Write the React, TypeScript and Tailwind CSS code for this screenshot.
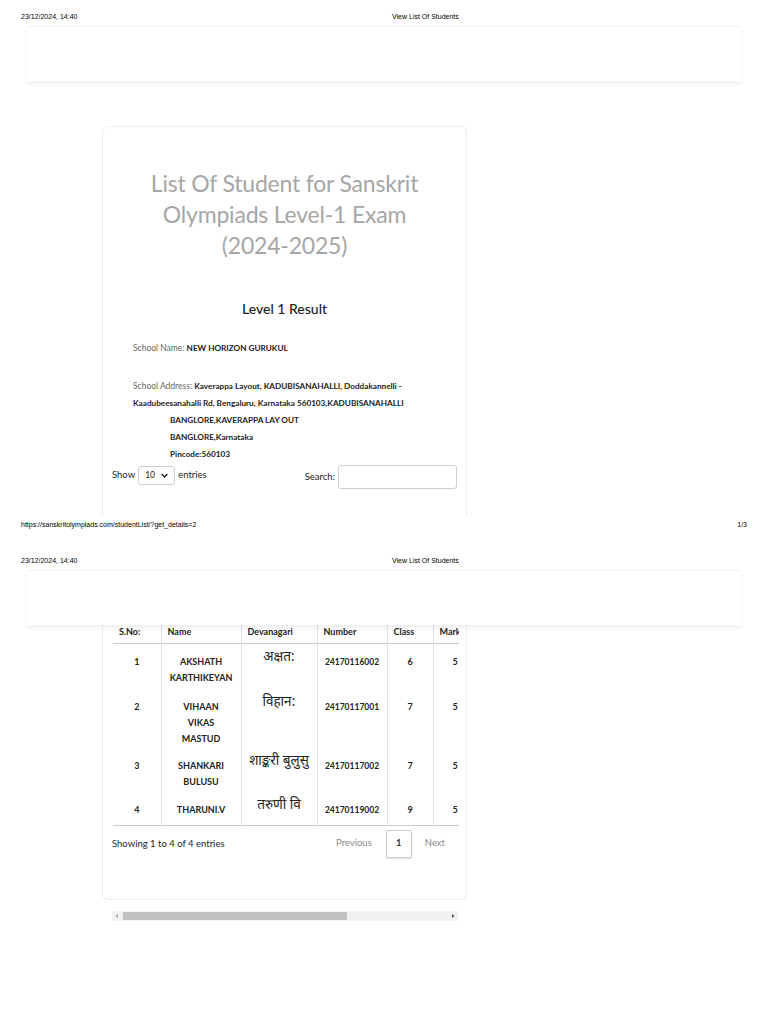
const students = [
  { sno: "1", name: ["AKSHATH", "KARTHIKEYAN"], dev: "अक्षत:", number: "24170116002", cls: "6", marks: "5", h: "h-[46px]" },
  { sno: "2", name: ["VIHAAN", "VIKAS", "MASTUD"], dev: "विहान:", number: "24170117001", cls: "7", marks: "5", h: "h-[59px]" },
  { sno: "3", name: ["SHANKARI", "BULUSU"], dev: "शाङ्करी बुलुसु", number: "24170117002", cls: "7", marks: "5", h: "h-[44px]" },
  { sno: "4", name: ["THARUNI.V"], dev: "तरुणी वि", number: "24170119002", cls: "9", marks: "5", h: "h-[33px]" },
];

const columns = [
  { label: "S.No:", width: "w-[48px]" },
  { label: "Name", width: "w-[80px]" },
  { label: "Devanagari", width: "w-[76px]" },
  { label: "Number", width: "w-[70px]" },
  { label: "Class", width: "w-[46px]" },
  { label: "Marks", width: "w-[70px]" },
];

const body = { fontFamily: "Lato, 'Noto Sans', sans-serif" };
const deva = { fontFamily: "'Noto Sans Devanagari', 'Noto Sans', Lato, sans-serif" };
const print = { fontFamily: "'Liberation Sans', Arial, sans-serif" };

const PrintHeader = () => (
  <div className="flex items-center h-[9px] text-[7px] text-black" style={print}>
    <span className="pl-[21px] w-[392px]">23/12/2024, 14:40</span>
    <span>View List Of Students</span>
  </div>
);

const NavBar = () => (
  <div className="ml-[27px] w-[714px] h-[55px] bg-white border-t border-[#f4f4f4] shadow-[0_3px_5px_rgba(0,0,0,0.07)]" />
);

export default function App() {
  return (
    <div className="w-[768px] bg-white">
      {/* page 1 */}
      <div className="h-[545px] flex flex-col pt-[13px]">
        <PrintHeader />
        <div className="mt-[4px]">
          <NavBar />
        </div>
        <div
          className="ml-[102px] mt-[45px] w-[365px] h-[389px] border border-[#ededed] border-b-0 rounded-t-[6px] px-[9px] pt-[41px] overflow-hidden"
          style={body}
        >
          <h1 className="text-center text-[23px] leading-[31px] text-[#a6a6a6] tracking-[-0.2px]">
            List Of Student for Sanskrit
            <br />
            Olympiads Level-1 Exam
            <br />
            (2024-2025)
          </h1>
          <h2 className="mt-[38px] text-center text-[14px] leading-[20px] text-[#222] font-medium">Level 1 Result</h2>
          <div className="mt-[21px] pl-[21px] text-[8.2px] leading-[17px] text-[#222]">
            <p>
              <span className="text-[#666] text-[8.5px]">School Name: </span>
              <span className="font-bold">NEW HORIZON GURUKUL</span>
            </p>
            <div className="mt-[21px] font-bold">
              <p>
                <span className="text-[#666] text-[8.5px] font-normal">School Address: </span>
                Kaverappa Layout, KADUBISANAHALLI, Doddakannelli -
              </p>
              <p>Kaadubeesanahalli Rd, Bengaluru, Karnataka 560103,KADUBISANAHALLI</p>
              <p className="pl-[37px]">BANGLORE,KAVERAPPA LAY OUT</p>
              <p className="pl-[37px]">BANGLORE,Karnataka</p>
              <p className="pl-[37px]">Pincode:560103</p>
            </div>
          </div>
          <div className="mt-[2px] flex items-start justify-between text-[9.5px] text-[#222]">
            <div className="flex items-center gap-[3px] h-[20px]">
              <span>Show</span>
              <div className="flex items-center justify-between w-[37px] h-[19px] border border-[#cfcfcf] rounded-[3px] px-[6px] text-[8.5px]">
                <span>10</span>
                <svg width="7" height="5" viewBox="0 0 10 6" fill="none" stroke="#222" strokeWidth="2">
                  <path d="M1 1l4 4 4-4" />
                </svg>
              </div>
              <span>entries</span>
            </div>
            <div className="flex items-center gap-[3px]">
              <span>Search:</span>
              <div className="w-[119px] h-[24px] border border-[#cfcfcf] rounded-[3px]" />
            </div>
          </div>
        </div>
        <div className="mt-[5px] flex items-center justify-between px-[21px] text-[7px] text-black" style={print}>
          <span>https://sanskritolympiads.com/studentList/?get_details=2</span>
          <span>1/3</span>
        </div>
      </div>

      {/* page 2 */}
      <div className="flex flex-col pt-[12px] pb-[100px]">
        <PrintHeader />
        <div className="mt-[4px] relative z-10">
          <NavBar />
        </div>
        <div
          className="ml-[102px] w-[365px] border border-[#ededed] border-t-0 rounded-b-[6px] px-[9px] pb-[41px]"
          style={body}
        >
          <div className="ml-[1px] w-[346px] overflow-hidden">
            <table className="border-collapse table-fixed w-[390px] text-[9px] text-[#222]">
              <thead>
                <tr className="border-b border-[#c8c8c8]">
                  {columns.map((c, i) => (
                    <th
                      key={i}
                      className={`${c.width} h-[18px] align-top pt-[1px] leading-[12px] text-left font-bold px-[6px] border-[#e2e2e2] whitespace-nowrap ${i > 0 ? "border-l" : ""}`}
                    >
                      {c.label}
                    </th>
                  ))}
                </tr>
              </thead>
              <tbody>
                {students.map((s, i) => (
                  <tr key={i} className={`${s.h} ${i === students.length - 1 ? "border-b border-[#c8c8c8]" : ""}`}>
                    <td className="align-top text-center font-bold pt-[10px] leading-[16px]">{s.sno}</td>
                    <td className="align-top text-center font-bold pt-[10px] leading-[16px] border-l border-[#e2e2e2]">
                      {s.name.map((n, j) => (
                        <div key={j}>{n}</div>
                      ))}
                    </td>
                    <td
                      className="align-top text-center pt-[4px] text-[13.5px] leading-[20px] border-l border-[#e2e2e2] whitespace-nowrap"
                      style={deva}
                    >
                      {s.dev}
                    </td>
                    <td className="align-top text-center font-bold pt-[10px] text-[8.5px] leading-[16px] border-l border-[#e2e2e2]">
                      {s.number}
                    </td>
                    <td className="align-top text-center font-bold pt-[10px] leading-[16px] border-l border-[#e2e2e2]">
                      {s.cls}
                    </td>
                    <td className="align-top text-left font-bold pt-[10px] pl-[19px] leading-[16px] border-l border-[#e2e2e2]">
                      {s.marks}
                    </td>
                  </tr>
                ))}
              </tbody>
            </table>
          </div>
          <div className="mt-[4px] flex items-start justify-between text-[9.5px]">
            <span className="mt-[7px] text-[#222]">Showing 1 to 4 of 4 entries</span>
            <div className="flex items-center pr-[12px]">
              <span className="text-[#888] mr-[14px]">Previous</span>
              <div className="w-[26px] h-[28px] flex items-center justify-center border border-[#cfcfcf] rounded-[2px] shadow-[0_1px_2px_rgba(0,0,0,0.15)] text-[8.5px] text-[#222] font-bold">
                1
              </div>
              <span className="text-[#888] ml-[13px]">Next</span>
            </div>
          </div>
        </div>
        <div className="ml-[112px] mt-[11px] w-[346px] h-[10px] bg-[#f1f1f1] flex items-center">
          <svg width="10" height="10" viewBox="0 0 10 10" className="shrink-0">
            <path d="M6 3L3.5 5 6 7z" fill="#a3a3a3" />
          </svg>
          <div className="ml-[1px] w-[224px] h-[8px] bg-[#c1c1c1]" />
          <div className="flex-1" />
          <svg width="10" height="10" viewBox="0 0 10 10" className="shrink-0">
            <path d="M4 3L6.5 5 4 7z" fill="#505050" />
          </svg>
        </div>
      </div>
    </div>
  );
}
